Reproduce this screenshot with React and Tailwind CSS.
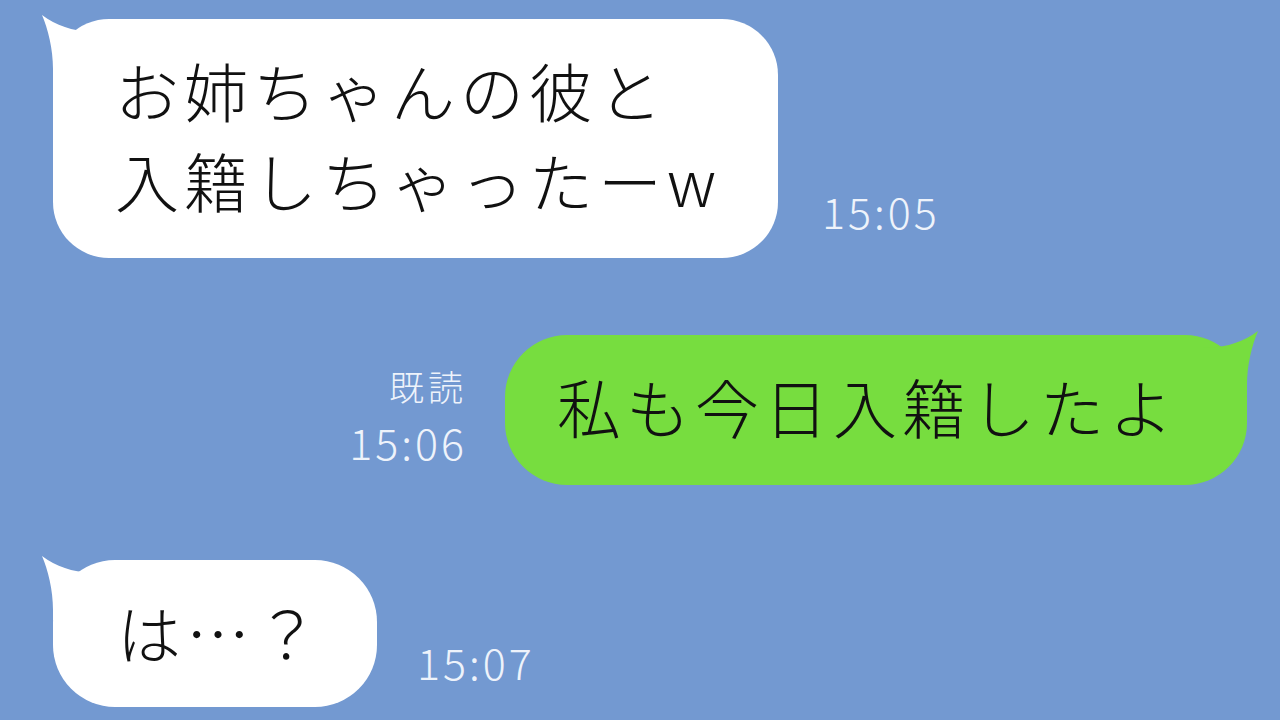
const jp = { fontFamily: '"Noto Sans CJK JP", "Noto Sans", sans-serif' };

const TailLeft = ({ color }) => (
  <svg width="60" height="70" viewBox="0 0 60 70" className="absolute -left-[12px] -top-[5px]">
    <path d="M1 1 C 17 13, 37 19, 57 17 L 57 65 L 12 65 L 12 55 C 12 35, 7 15, 1 1 Z" fill={color} />
  </svg>
);

const TailRight = ({ color }) => (
  <svg width="60" height="70" viewBox="0 0 60 70" className="absolute -right-[12px] -top-[5px]">
    <path d="M59 1 C 43 13, 23 19, 3 17 L 3 65 L 48 65 L 48 55 C 48 35, 53 15, 59 1 Z" fill={color} />
  </svg>
);

const Time = ({ children, className = '' }) => (
  <span style={jp} className={`text-[43px] leading-none tracking-[3px] font-light text-[#eef3fb] ${className}`}>
    {children}
  </span>
);

export default function App() {
  return (
    <div style={jp} className="w-[1280px] h-[720px] bg-[#7399d1] overflow-hidden flex flex-col font-light">
      {/* row 1 */}
      <div className="flex items-end pl-[53px] mt-[19px]">
        <div className="relative w-[725px] h-[239px] bg-white rounded-[56px] flex flex-col justify-center pl-[62px] pb-[10px] text-[64px] leading-[90px] tracking-[5px] text-[#111]">
          <TailLeft color="#ffffff" />
          <span className="relative">お姉ちゃんの彼と</span>
          <span className="relative">入籍しちゃったーw</span>
        </div>
        <Time className="ml-[44px] mb-[26px]">15:05</Time>
      </div>

      {/* row 2 */}
      <div className="flex items-end justify-end pr-[33px] mt-[77px]">
        <div className="flex flex-col items-end mr-[38px] mb-[22px]">
          <span className="text-[35px] leading-[40px] tracking-[4px] text-[#eef3fb] mb-[14px]">既読</span>
          <Time>15:06</Time>
        </div>
        <div className="relative w-[742px] h-[150px] bg-[#77dd3f] rounded-[62px] flex items-center pl-[52px] pb-[10px] text-[64px] leading-none tracking-[5px] text-[#111]">
          <TailRight color="#77dd3f" />
          <span className="relative">私も今日入籍したよ</span>
        </div>
      </div>

      {/* row 3 */}
      <div className="flex items-end pl-[53px] mt-[75px]">
        <div className="relative w-[324px] h-[147px] bg-white rounded-[62px] flex items-center pl-[64px] pb-[6px] text-[64px] leading-none tracking-[5px] text-[#111]">
          <TailLeft color="#ffffff" />
          <span className="relative">は…？</span>
        </div>
        <Time className="ml-[40px] mb-[24px]">15:07</Time>
      </div>
    </div>
  );
}
